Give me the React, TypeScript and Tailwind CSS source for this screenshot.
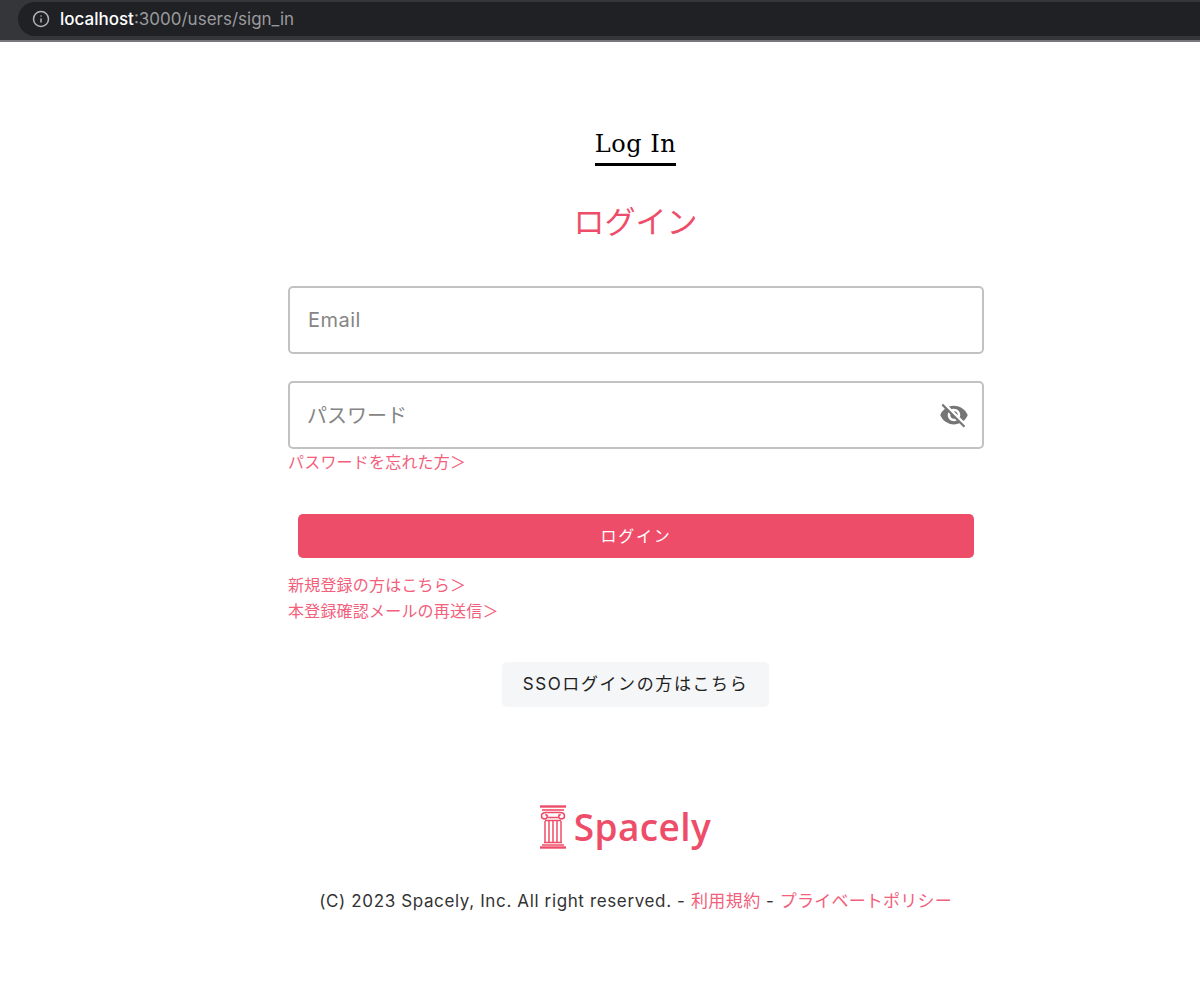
import { Info } from "lucide-react";
import { MdVisibilityOff } from "react-icons/md";

const jp = "font-['Inter','Noto_Sans_CJK_JP',sans-serif]";

function SpacelyMark() {
  return (
    <svg width="28" height="44" viewBox="0 0 28 44" fill="none" stroke="#ee4d6a" strokeWidth="1.6">
      <path d="M1 1.500h26" strokeWidth="2.400" />
      <path d="M3 5h22" />
      <path d="M7 7.500c-3 0-4.500 1.500-4.500 3.400s1.500 3 3.200 3 2.600-1 2.600-2.300-.9-2-2-2" />
      <path d="M21 7.500c3 0 4.500 1.500 4.500 3.400s-1.500 3-3.200 3-2.600-1-2.600-2.300.9-2 2-2" />
      <path d="M7 7.500h14M9 12.500h10M6 15.500h16" />
      <path d="M6 16v21M10 16v21M14 16v21M18 16v21M22 16v21" strokeWidth="1.500" />
      <path d="M5 37.500h18M3 40h22" />
      <path d="M1 42.500h26" strokeWidth="2.400" />
    </svg>
  );
}

export default function App() {
  return (
    <div className={`min-h-[989px] bg-white ${jp}`}>
      <div className="h-[42px] bg-[#35363a] border-b-2 border-[#77787b] pt-[2px] pl-[18px] pr-0">
        <div className="h-[34px] rounded-l-[17px] bg-[#202124] flex items-center pl-[14px] gap-[10px]">
          <Info size={18} color="#b4b5b8" strokeWidth={2} />
          <span className="text-[17px] text-[#9a9b9e] font-['Inter',sans-serif] leading-none">
            <span className="text-white font-medium">localhost</span>:3000/users/sign_in
          </span>
        </div>
      </div>

      <main className="pl-[71px] flex flex-col items-center">
        <h2 className="mt-[86px] [font-family:'DejaVu_Serif',serif] text-[24px] tracking-[0.5px] pt-[1px] leading-[30px] text-black border-b-[3px] border-black pb-[4px] w-[81px] flex justify-center whitespace-nowrap">
          Log In
        </h2>
        <h1 className="mt-[33px] text-[31px] leading-[45px] text-[#ee4d6a] font-normal">ログイン</h1>

        <form className="w-[696px] ml-[1px] mt-[42px] flex flex-col">
          <input
            placeholder="Email"
            className="h-[68px] rounded-[5px] border-2 border-[#c2c2c2] pl-[18px] pr-[17px] text-[20px] tracking-[0.5px] placeholder:text-[#858585] outline-none"
          />
          <div className="relative mt-[27px]">
            <input
              placeholder="パスワード"
              className="w-full h-[68px] rounded-[5px] border-2 border-[#c2c2c2] px-[17px] pt-[1px] text-[20px] placeholder:text-[#858585] outline-none"
            />
            <MdVisibilityOff className="absolute right-[15px] top-[19px]" size={30} color="#757575" />
          </div>
          <a className="mt-[1px] text-[16px] leading-[24px] text-[#f2607c] tracking-[0.2px]">パスワードを忘れた方＞</a>

          <button
            type="button"
            className="mt-[40px] mx-[10px] h-[44px] rounded-[5px] bg-[#ee4d6a] text-white text-[16px] tracking-[1.7px]"
          >
            ログイン
          </button>

          <div className="mt-[14px] flex flex-col text-[16px] leading-[26px] text-[#f2607c] tracking-[0.2px]">
            <a>新規登録の方はこちら＞</a>
            <a>本登録確認メールの再送信＞</a>
          </div>

          <button
            type="button"
            className="self-center mr-[1px] mt-[38px] h-[45px] w-[267px] rounded-[5px] bg-[#f5f6f8] text-[#222] text-[17px] tracking-[1.6px]"
          >
            SSOログインの方はこちら
          </button>
        </form>

        <div className="mt-[98px] flex items-center gap-[7px] pr-[21px]">
          <SpacelyMark />
          <span className="font-['Open_Sans',sans-serif] font-semibold text-[37px] leading-[44px] text-[#ee4d6a] tracking-[0.4px]">
            Spacely
          </span>
        </div>

        <p className="mt-[39px] text-[17px] leading-[26px] text-[#333] tracking-[0.63px] whitespace-nowrap">
          (C) 2023 Spacely, Inc. All right reserved. - <a className="text-[#f2607c] tracking-[0.4px]">利用規約</a> -{" "}
          <a className="text-[#f2607c] tracking-[0.2px]">プライベートポリシー</a>
        </p>
      </main>
    </div>
  );
}
